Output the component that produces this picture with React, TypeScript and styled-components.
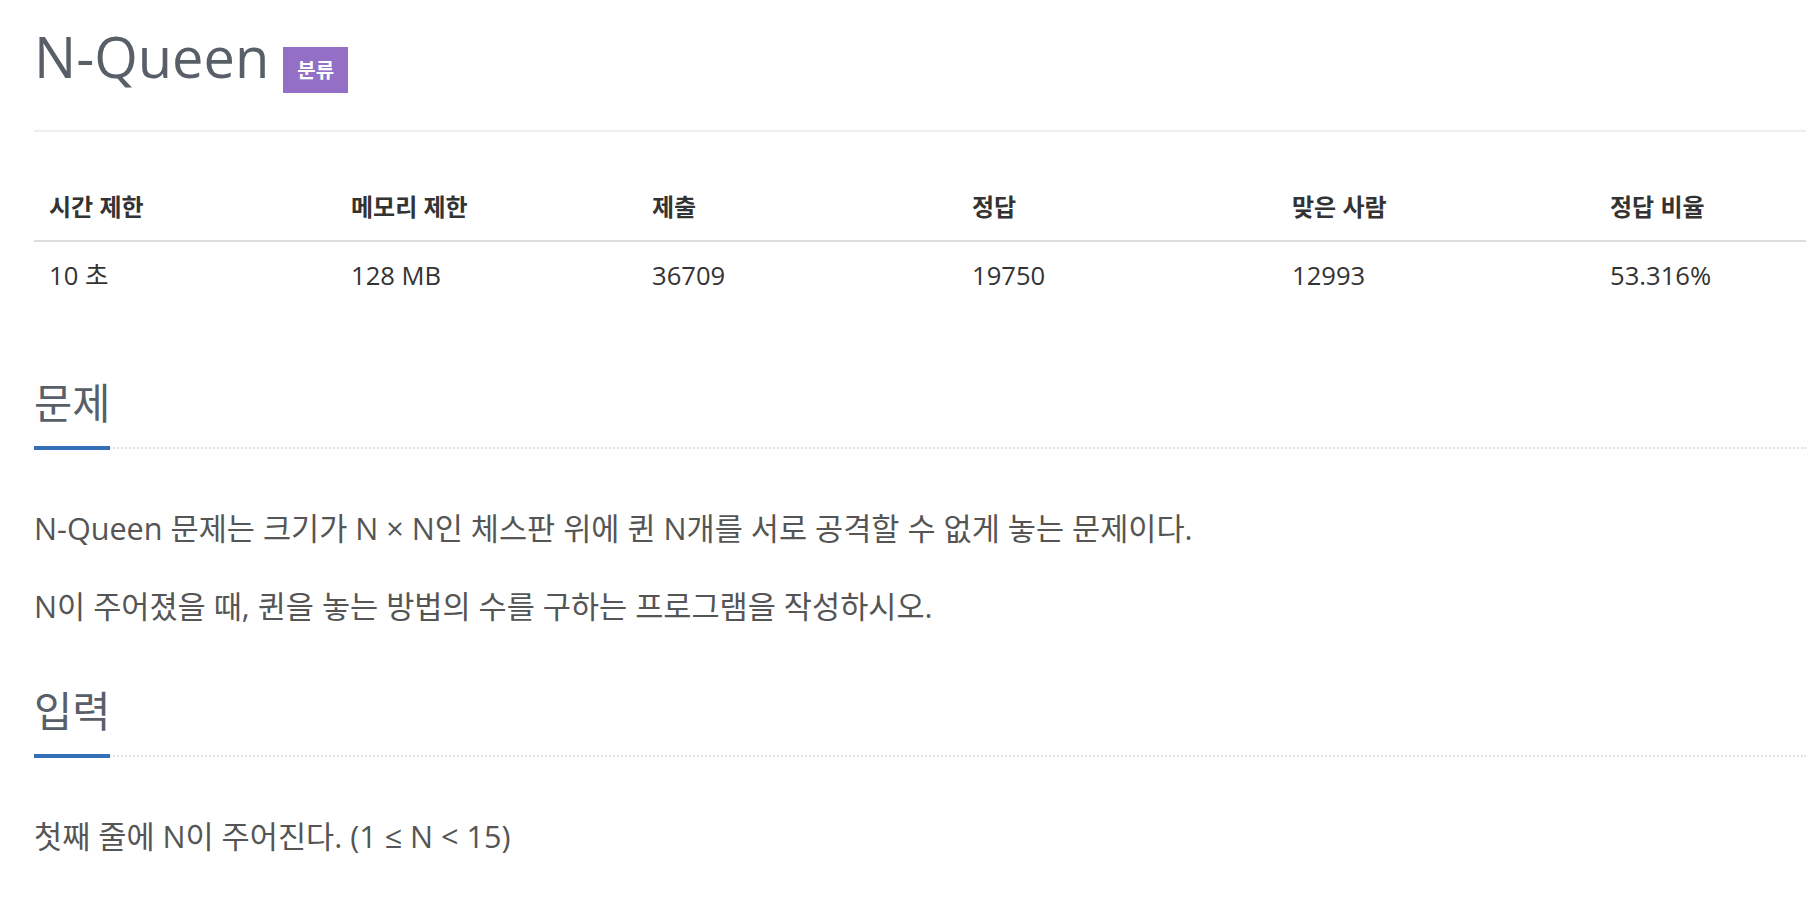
import styled, { createGlobalStyle } from 'styled-components';

const GlobalStyle = createGlobalStyle`
	html, body {
		margin: 0;
		padding: 0;
		background: #fff;
		overflow: hidden;
	}

	body {
		font-family: 'Open Sans', 'Noto Sans CJK KR', sans-serif;
		color: #555;
	}
`;

const Page = styled.div`
	padding: 26px 0 0 34px;
	width: 1772px;
`;

const Header = styled.div`
	display: flex;
	align-items: baseline;
	gap: 14px;
	padding-bottom: 37px;
	border-bottom: 2px solid #eee;
`;

const Title = styled.h1`
	margin: 0;
	font-size: 56px;
	line-height: 1.1;
	font-weight: 400;
	color: #585f69;
`;

const Badge = styled.span`
	display: inline-flex;
	align-items: center;
	height: 46px;
	padding: 0 14px;
	background-color: #946fc6;
	color: #fff;
	font-size: 20px;
	font-weight: 700;
`;

const StatsTable = styled.table`
	width: 100%;
	margin-top: 37px;
	border-collapse: collapse;
	table-layout: fixed;
	line-height: 32px;
	color: #333;

	th {
		text-align: left;
		font-size: 24px;
		font-weight: 700;
		padding: 22px 15px 17px;
		border-bottom: 2px solid #ddd;
	}

	td {
		font-size: 25.6px;
		padding: 18px 15px 12px;
	}
`;

const Section = styled.section<{ $gap: number }>`
	margin-top: ${props => props.$gap}px;
`;

const Headline = styled.div`
	border-bottom: 2px dotted #e2e2e2;
`;

const SectionTitle = styled.h2`
	display: inline-block;
	margin: 0 0 -3px;
	padding-bottom: 22px;
	font-size: 41.5px;
	line-height: 42px;
	font-weight: 400;
	color: #585f69;
	border-bottom: 4px solid #3470b7;
`;

const Body = styled.div`
	padding-top: 55px;

	p {
		margin: 0 0 30px;
		font-size: 30.6px;
		line-height: 48px;
		color: #555;
	}
`;

const columns = [
	{ label: '시간 제한', value: '10 초', width: 302 },
	{ label: '메모리 제한', value: '128 MB', width: 301 },
	{ label: '제출', value: '36709', width: 320 },
	{ label: '정답', value: '19750', width: 320 },
	{ label: '맞은 사람', value: '12993', width: 318 },
	{ label: '정답 비율', value: '53.316%' },
];

const sections = [
	{
		title: '문제',
		gap: 78,
		lines: [
			'N-Queen 문제는 크기가 N × N인 체스판 위에 퀸 N개를 서로 공격할 수 없게 놓는 문제이다.',
			'N이 주어졌을 때, 퀸을 놓는 방법의 수를 구하는 프로그램을 작성하시오.',
		],
	},
	{
		title: '입력',
		gap: 60,
		lines: ['첫째 줄에 N이 주어진다. (1 ≤ N < 15)'],
	},
];

const App = () => {
	return (
		<>
			<GlobalStyle />
			<Page>
				<Header>
					<Title>N-Queen</Title>
					<Badge>분류</Badge>
				</Header>

				<StatsTable>
					<colgroup>
						{columns.map(column => (
							<col key={column.label} style={column.width ? { width: column.width } : undefined} />
						))}
					</colgroup>
					<thead>
						<tr>
							{columns.map(column => (
								<th key={column.label}>{column.label}</th>
							))}
						</tr>
					</thead>
					<tbody>
						<tr>
							{columns.map(column => (
								<td key={column.label}>{column.value}</td>
							))}
						</tr>
					</tbody>
				</StatsTable>

				{sections.map(section => (
					<Section key={section.title} $gap={section.gap}>
						<Headline>
							<SectionTitle>{section.title}</SectionTitle>
						</Headline>
						<Body>
							{section.lines.map(line => (
								<p key={line}>{line}</p>
							))}
						</Body>
					</Section>
				))}
			</Page>
		</>
	);
};

export default App;
